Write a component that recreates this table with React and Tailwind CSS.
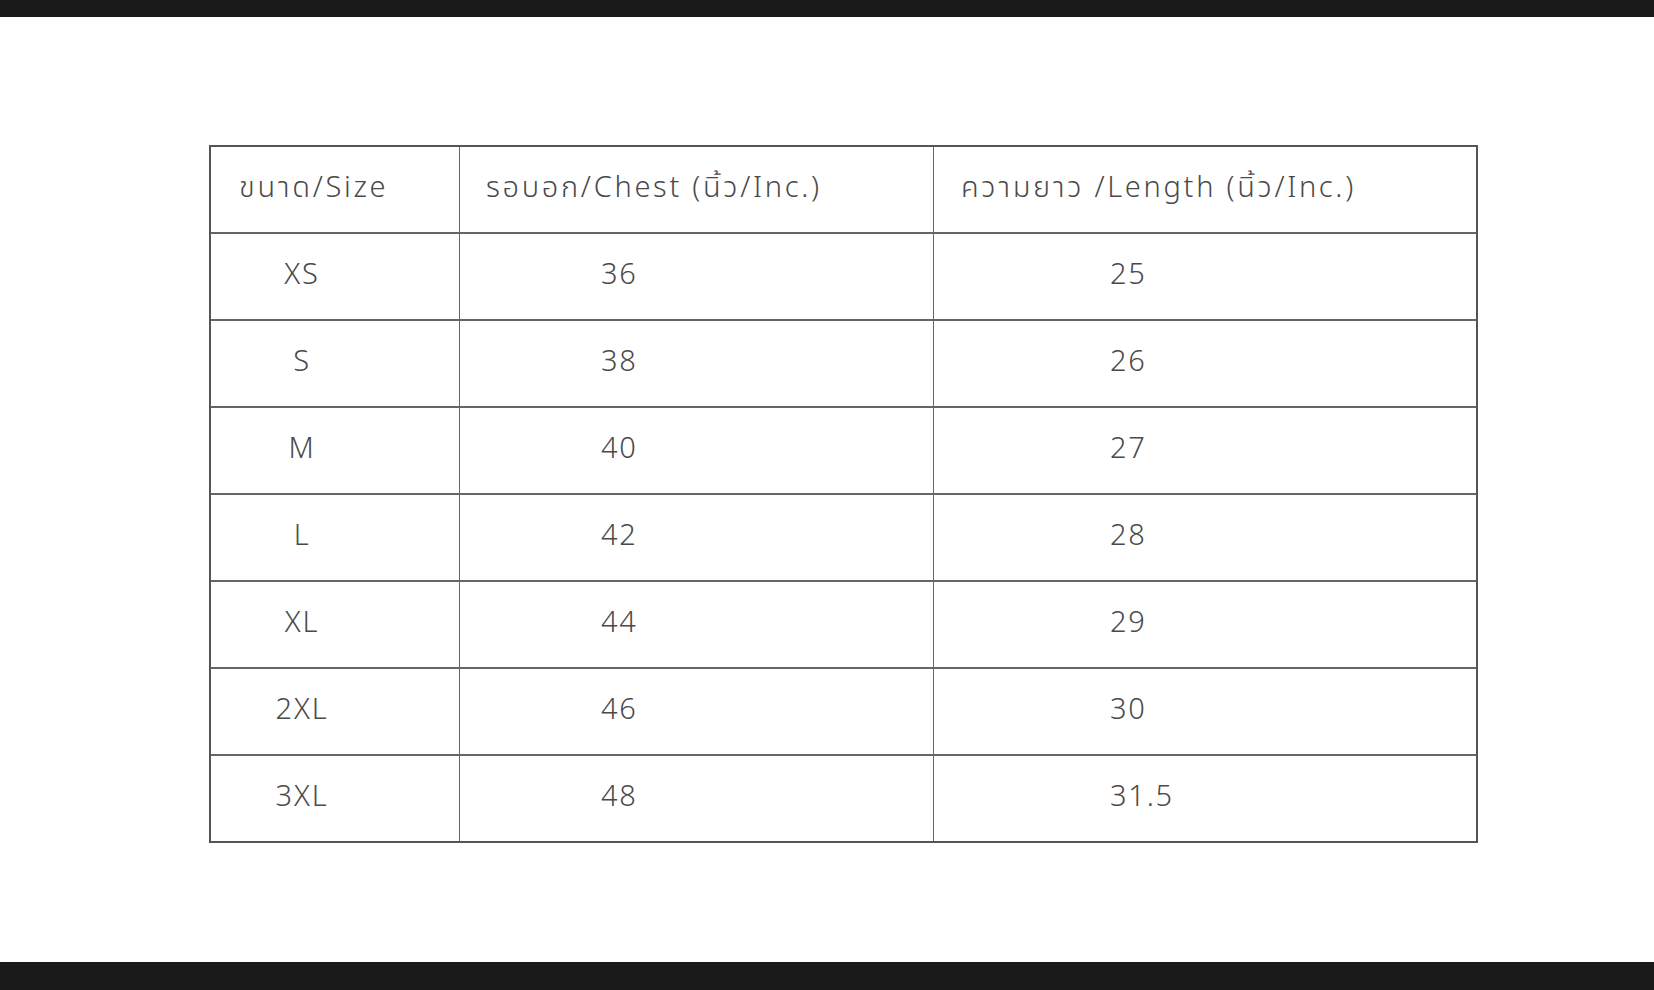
const rows = [
  ['XS', '36', '25'],
  ['S', '38', '26'],
  ['M', '40', '27'],
  ['L', '42', '28'],
  ['XL', '44', '29'],
  ['2XL', '46', '30'],
  ['3XL', '48', '31.5'],
];

export default function App() {
  return (
    <div
      className="flex h-[990px] flex-col bg-white text-[#4a4a4a]"
      style={{ fontFamily: '"Noto Sans", "Noto Sans Thai", "DejaVu Sans", sans-serif' }}
    >
      <div className="h-[17px] shrink-0 bg-[#1a1a1a]" />

      <div className="flex-1 pl-[209px] pt-[128px]">
        <div className="w-[1269px] border-2 border-[#555]">
          {/* header */}
          <div className="grid h-[85px] grid-cols-[248px_474px_1fr] text-[29px] font-light tracking-[2.7px]">
            <div className="flex items-center pb-[8px] pl-[28px]">ขนาด/Size</div>
            <div className="flex items-center border-l border-[#666] pb-[8px] pl-[26px]">
              รอบอก/Chest (นิ้ว/Inc.)
            </div>
            <div className="flex items-center border-l border-[#666] pb-[8px] pl-[27px]">
              ความยาว /Length (นิ้ว/Inc.)
            </div>
          </div>

          {rows.map(([size, chest, length]) => (
            <div
              key={size}
              className="grid h-[87px] grid-cols-[248px_474px_1fr] border-t-2 border-[#666] text-[29px] font-light tracking-[1.8px]"
            >
              <div className="flex items-center pb-[8px]">
                <span className="w-[182px] text-center">{size}</span>
              </div>
              <div className="flex items-center border-l border-[#666] pb-[8px] pl-[141px]">{chest}</div>
              <div className="flex items-center border-l border-[#666] pb-[8px] pl-[176px]">{length}</div>
            </div>
          ))}
        </div>
      </div>

      <div className="h-[28px] shrink-0 bg-[#1a1a1a]" />
    </div>
  );
}
